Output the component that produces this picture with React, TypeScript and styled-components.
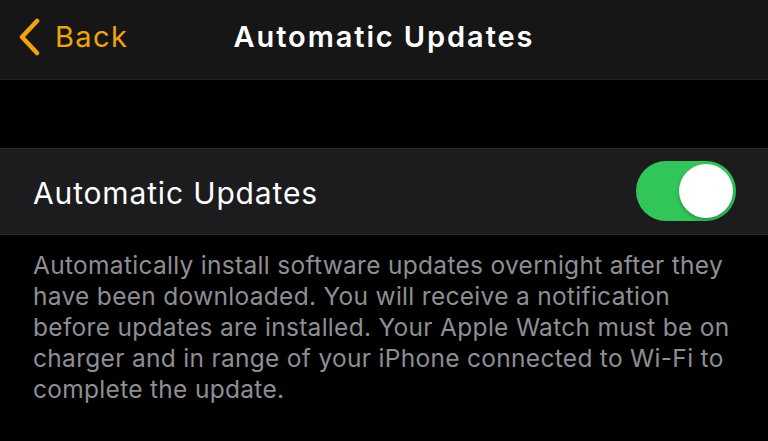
import styled, { createGlobalStyle } from "styled-components";

const GlobalStyle = createGlobalStyle`
    html, body {
        margin: 0;
        padding: 0;
        background: #000;
    }
    body {
        font-family: Inter, "Noto Sans", sans-serif;
        -webkit-font-smoothing: antialiased;
    }
`

const Screen = styled.div`
    width: 768px;
    height: 441px;
    background: #000;
    display: flex;
    flex-direction: column;
    overflow: hidden;
`

const NavBar = styled.div`
    height: 80px;
    background: #161616;
    border-bottom: 1px solid #222;
    box-sizing: border-box;
    display: grid;
    grid-template-columns: 1fr auto 1fr;
    align-items: center;
    padding: 0 17px 6px 17px;
`

const BackButton = styled.div`
    display: flex;
    align-items: center;
    gap: 14px;
    color: #f1a30d;
    font-size: 29px;
    letter-spacing: 1.4px;
`

const Title = styled.div`
    color: #fff;
    font-size: 29px;
    font-weight: 600;
    letter-spacing: 1.9px;
`

const Spacer = styled.div`
    height: 68px;
`

const Row = styled.div`
    height: 87px;
    box-sizing: border-box;
    background: #1c1c1e;
    border-top: 1px solid #2c2c2e;
    border-bottom: 1px solid #2c2c2e;
    display: flex;
    align-items: center;
    justify-content: space-between;
    padding: 0 32px 0 33px;
`

const RowLabel = styled.span`
    color: #fff;
    font-size: 30px;
    font-weight: 400;
    letter-spacing: 0.85px;
    margin-top: 2px;
`

const Switch = styled.div<{ $on: boolean }>`
    width: 100px;
    height: 60px;
    border-radius: 30px;
    background: ${p => p.$on ? "#32c65a" : "#39393d"};
    position: relative;
    margin-top: -2px;
`

const Knob = styled.div<{ $on: boolean }>`
    position: absolute;
    top: 3px;
    left: ${p => p.$on ? "43px" : "3px"};
    width: 54px;
    height: 54px;
    border-radius: 50%;
    background: #fff;
    box-shadow: 0 2px 4px rgba(0, 0, 0, 0.25);
`

const Footer = styled.p`
    margin: 0;
    padding: 15px 0 0 33px;
    color: #8e8e93;
    font-size: 24.5px;
    line-height: 31px;
    letter-spacing: 0.3px;
    white-space: nowrap;
`

const Chevron = () => (
    <svg width="24" height="38" viewBox="0 0 24 38" fill="none">
        <path d="M20 3 L5 19 L20 35" stroke="#f1a30d" strokeWidth="4.5" strokeLinecap="round" strokeLinejoin="round" />
    </svg>
)

const footerLines = [
    "Automatically install software updates overnight after they",
    "have been downloaded. You will receive a notification",
    "before updates are installed. Your Apple Watch must be on",
    "charger and in range of your iPhone connected to Wi-Fi to",
    "complete the update.",
]

const App: React.FC = () => {
    return (
        <>
            <GlobalStyle />
            <Screen>
                <NavBar>
                    <BackButton>
                        <Chevron />
                        Back
                    </BackButton>
                    <Title>Automatic Updates</Title>
                    <div />
                </NavBar>
                <Spacer />
                <Row>
                    <RowLabel>Automatic Updates</RowLabel>
                    <Switch $on={true}>
                        <Knob $on={true} />
                    </Switch>
                </Row>
                <Footer>
                    {footerLines.map((line, i) => (
                        <span key={i}>{line}{i < footerLines.length - 1 && <br />}</span>
                    ))}
                </Footer>
            </Screen>
        </>
    );
};

export default App;
